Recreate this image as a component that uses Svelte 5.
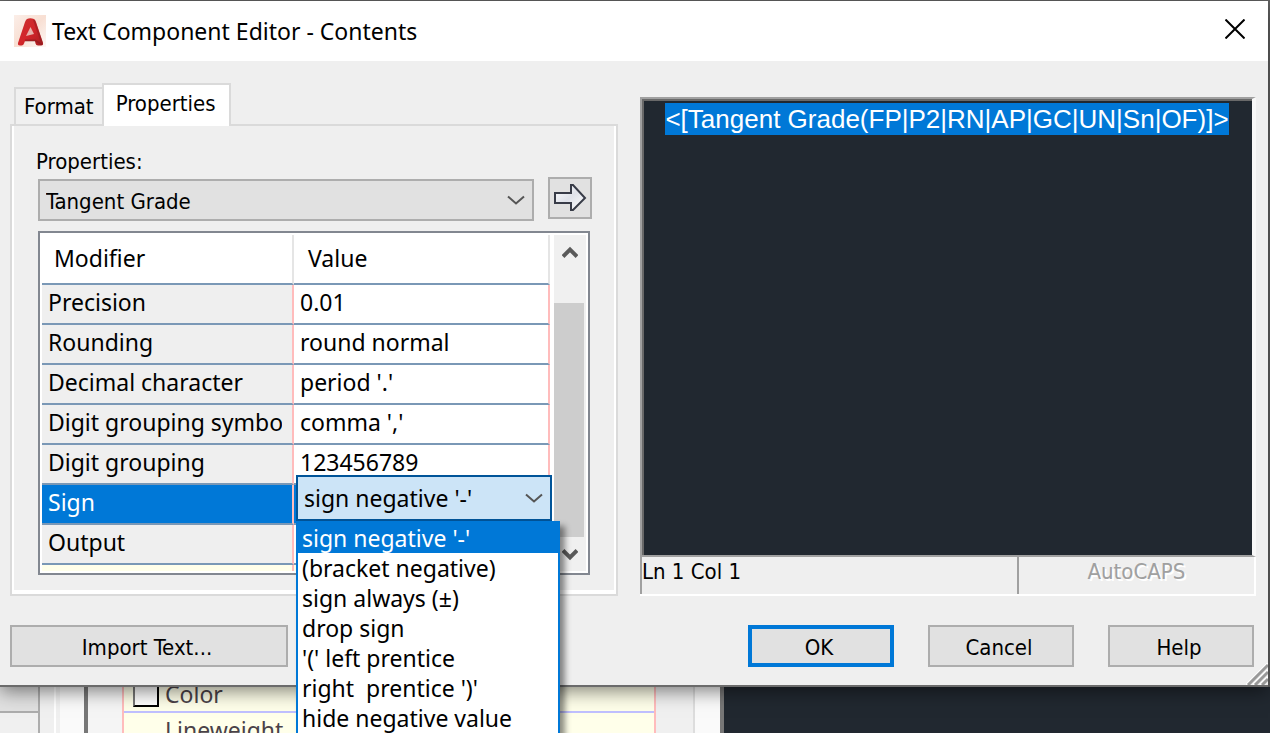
<script lang="ts">
    const modifiers = [
        { name: "Precision", value: "0.01" },
        { name: "Rounding", value: "round normal" },
        { name: "Decimal character", value: "period '.'" },
        { name: "Digit grouping symbol", value: "comma ','" },
        { name: "Digit grouping", value: "123456789" },
        { name: "Sign", value: "sign negative '-'" },
        { name: "Output", value: "" },
    ];
    const signs = [
        "sign negative '-'",
        "(bracket negative)",
        "sign always (±)",
        "drop sign",
        "'(' left prentice",
        "right  prentice ')'",
        "hide negative value",
    ];

    let sign = $state(signs[0]);
    let tab = $state("Properties");
    let open = $state(true);

    const pick = (value: string) => {
        sign = value;
        open = false;
    }
</script>

{#snippet chevron()}
    <svg class="chevron" width="18" height="12" viewBox="0 0 18 12" aria-hidden="true">
        <path d="M1 2.5 9 9.5 17 2.5" fill="none" stroke="#555" stroke-width="2" />
    </svg>
{/snippet}

<div class="screen">
    <section class="dialog" role="dialog" aria-label="Text Component Editor - Contents">
        <header>
            <svg class="logo" width="32" height="32" viewBox="0 0 32 32" aria-hidden="true">
                <defs>
                    <linearGradient id="paper" x2="1" y2="1">
                        <stop offset="0" stop-color="#fbeee8" />
                        <stop offset=".5" stop-color="#f8dfd3" />
                        <stop offset="1" stop-color="#fdf8f5" />
                    </linearGradient>
                    <linearGradient id="red" x2="1" y2="1">
                        <stop offset="0" stop-color="#c9302f" />
                        <stop offset=".5" stop-color="#d3262a" />
                        <stop offset="1" stop-color="#a81c20" />
                    </linearGradient>
                </defs>
                <rect width="32" height="32" fill="url(#paper)" />
                <path d="M13 4q3-1.500 7 0 1 .5 2 3l7 21q.5 2.500-2 2.500h-3q-2 0-2.500-2L21 26H11l-1 2.500q-.5 2-2.500 2H6q-2.500 0-2-2.500l7-21q1-2.500 2-3z" fill="url(#red)" />
                <path d="M16.500 12 20 19l-8 2z" fill="#e6b3ab" />
                <path d="M11 25.500h10l7 4" fill="none" stroke="#7f1a1d" stroke-width="2" opacity=".5" />
                <path d="M20 5l8 23" stroke="#8e1d20" stroke-width="2" opacity=".5" />
            </svg>
            <h1>Text Component Editor - Contents</h1>
            <button class="close" aria-label="Close">
                <svg width="20" height="20" viewBox="0 0 20 20">
                    <path d="M.5.5l19 19M19.5.5l-19 19" stroke="#000" stroke-width="2" />
                </svg>
            </button>
        </header>

        <div class="body">
            <div class="left">
                <div class="tabs" role="tablist">
                    {#each ["Format", "Properties"] as name}
                        <button role="tab" class:active={tab == name} aria-selected={tab == name} on:click={() => tab = name}>{name}</button>
                    {/each}
                </div>
                <div class="panel">
                    <label for="property">Properties:</label>
                    <div class="picker">
                        <div class="combo">
                            <select id="property"><option>Tangent Grade</option></select>
                            {@render chevron()}
                        </div>
                        <button class="insert" aria-label="Insert property">
                            <svg width="34" height="30" viewBox="0 0 34 30">
                                <defs>
                                    <linearGradient id="arrow" x2="1" y2="1">
                                        <stop offset="0" stop-color="#fff" />
                                        <stop offset=".5" stop-color="#dfe2ea" />
                                        <stop offset="1" stop-color="#fff" />
                                    </linearGradient>
                                </defs>
                                <path d="M2 10h16V2h2l12 13-12 12h-2v-7H2z" fill="url(#arrow)" stroke="#383c48" stroke-width="2" />
                            </svg>
                        </button>
                    </div>

                    <div class="list">
                        <table>
                            <thead>
                                <tr><th>Modifier</th><th>Value</th></tr>
                            </thead>
                            <tbody>
                                {#each modifiers as row}
                                    <tr class:selected={row.name == "Sign"}>
                                        <td><div class="clip">{row.name}</div></td>
                                        <td>
                                            {#if row.name == "Sign"}
                                                <div class="editor">
                                                    <div class="combo hot">
                                                        <select aria-label="Sign" bind:value={sign}>
                                                            {#each signs as s}<option>{s}</option>{/each}
                                                        </select>
                                                        {@render chevron()}
                                                    </div>
                                                    {#if open}
                                                        <div class="options" role="listbox">
                                                            {#each signs as s}
                                                                <button role="option" aria-selected={s == sign} class:current={s == sign} on:click={() => pick(s)}>{s}</button>
                                                            {/each}
                                                        </div>
                                                    {/if}
                                                </div>
                                            {:else}
                                                {row.value}
                                            {/if}
                                        </td>
                                    </tr>
                                {/each}
                                <tr class="blank"><td></td><td></td></tr>
                            </tbody>
                        </table>
                        <div class="scrollbar">
                            <svg width="16" height="14" viewBox="0 0 16 14" aria-hidden="true">
                                <path d="M1 10.5 8 3.5 15 10.5" fill="none" stroke="#5a5a5a" stroke-width="4" />
                            </svg>
                            <div class="thumb"></div>
                            <svg width="16" height="14" viewBox="0 0 16 14" aria-hidden="true">
                                <path d="M1 3.5 8 10.5 15 3.5" fill="none" stroke="#5a5a5a" stroke-width="4" />
                            </svg>
                        </div>
                    </div>
                </div>
            </div>

            <div class="right">
                <div class="preview" contenteditable="true" role="textbox" aria-label="Contents" tabindex="0" spellcheck="false"><span>&lt;[Tangent Grade(FP|P2|RN|AP|GC|UN|Sn|OF)]&gt;</span></div>
                <div class="status">
                    <div>Ln 1 Col 1</div>
                    <div class="caps">AutoCAPS</div>
                </div>
            </div>
        </div>

        <footer>
            <button class="import">Import Text...</button>
            <button class="ok">OK</button>
            <button>Cancel</button>
            <button>Help</button>
        </footer>
        <svg class="grip" width="22" height="22" viewBox="0 0 22 22" aria-hidden="true">
            <path d="M0 22 22 0M7 22 22 7M14 22l8-8" stroke="#fff" stroke-width="2" />
            <path d="M2 22 22 2M9 22 22 9M16 22l6-6" stroke="#999" stroke-width="3" />
        </svg>
    </section>

    <!-- window behind the dialog -->
    <div class="behind">
        <div class="edge"></div>
        <div class="gutter"></div>
        <div class="grid">
            <label class="line"><input type="checkbox" />Color</label>
            <div class="line">Lineweight</div>
        </div>
        <div class="rail"></div>
        <div class="canvas"></div>
    </div>
</div>

<style>
    :global(body) {
        background: #212830;
    }

    .screen {
        --ui: "DejaVu Sans Condensed", "Noto Sans", sans-serif;
        --grid: "Noto Sans", "Open Sans", sans-serif;
        box-sizing: border-box;
        display: flex;
        flex-direction: column;
        height: 100vh;
        padding-top: 1px;
        overflow: hidden;
        background: #666;
        font-family: var(--ui);
        font-size: 22px;
        color: #000;
    }

    .screen * {
        box-sizing: border-box;
    }

    button,
    select {
        font: inherit;
        color: inherit;
    }

    button {
        padding: 0;
        border: 2px solid #adadad;
        background: #e1e1e1;
    }

    .dialog {
        position: relative;
        z-index: 1;
        margin-right: 2px;
        background: #efefef;
        border-bottom: 2px solid #6b6b6b;
        box-shadow: 0 4px 18px rgba(0, 0, 0, .5);
    }

    header {
        display: flex;
        align-items: center;
        height: 60px;
        padding: 0 23px 0 14px;
        background: #fff;
    }

    h1 {
        flex: 1;
        margin: 0 0 0 6px;
        font-family: var(--grid);
        font-size: 23px;
        font-weight: normal;
    }

    .close {
        display: flex;
        padding-bottom: 4px;
        border: none;
        background: none;
    }

    .body {
        display: flex;
        gap: 22px;
        padding: 22px 12px 0 10px;
    }

    .left {
        display: flex;
        flex-direction: column;
        flex: 608 1 0;
        min-width: 0;
    }

    .tabs {
        position: relative;
        display: flex;
        align-items: flex-end;
        padding-left: 4px;
        margin-bottom: -2px;
    }

    .tabs button {
        height: 39px;
        padding: 0 8px;
        background: #f0f0f0;
        border-color: #dadada;
        border-right: none;
    }

    .tabs button.active {
        height: 43px;
        padding: 0 13px 4px 12px;
        background: #fff;
        border: 2px solid #dadada;
        border-bottom: none;
    }

    .panel {
        flex: 1;
        padding: 20px 26px 19px 24px;
        border: 2px solid #dadada;
        box-shadow: inset 2px 0 #fff, inset -2px -4px #fff;
    }

    .panel label {
        display: block;
        line-height: 32px;
    }

    .picker {
        display: flex;
        align-items: flex-start;
        gap: 14px;
        margin: -1px -2px 10px 2px;
    }

    .combo {
        position: relative;
        display: flex;
        align-items: center;
        flex: 1;
        margin-top: 2px;
    }

    .combo select {
        appearance: none;
        width: 100%;
        height: 42px;
        padding: 2px 30px 0 6px;
        border: 2px solid #adadad;
        border-radius: 0;
        background: #e1e1e1;
    }

    .chevron {
        position: absolute;
        right: 9px;
        pointer-events: none;
    }

    .insert {
        display: flex;
        align-items: center;
        justify-content: center;
        width: 44px;
        height: 42px;
    }

    .list {
        display: flex;
        margin-left: 2px;
        padding: 2px;
        border: 2px solid #828790;
        background: #fff;
        font-family: var(--grid);
        font-size: 23px;
    }

    table {
        flex: 1;
        table-layout: fixed;
        border-collapse: separate;
        border-spacing: 0;
        width: 100%;
    }

    th {
        height: 50px;
        padding: 0 12px 2px;
        border-right: 2px solid #e5e5e5;
        border-bottom: 2px solid #7a98b6;
        font-weight: normal;
        line-height: 32px;
        text-align: left;
    }

    th:first-child {
        width: 252px;
    }

    th + th {
        padding-left: 14px;
    }

    td {
        height: 40px;
        padding: 0 10px 4px 6px;
        border-right: 2px solid #ffbcbc;
        border-bottom: 2px solid #7a98b6;
        background: #efefef;
        line-height: 32px;
    }

    td + td {
        background: #fff;
    }

    .clip {
        overflow: hidden;
        white-space: nowrap;
    }

    .selected td {
        background: #0078d7;
        color: #fff;
    }

    .blank td {
        height: 6px;
        padding: 0;
        border-bottom: none;
        background: #ffffea;
    }

    .editor {
        position: absolute;
        width: 256px;
        margin: -27px 0 0 -4px;
        color: #000;
    }

    .hot {
        margin: 0;
    }

    .hot select {
        height: 46px;
        padding-top: 0;
        border-color: #005499;
        background: #cce4f7;
    }

    .options {
        position: absolute;
        top: 100%;
        left: 0;
        display: flex;
        flex-direction: column;
        width: 264px;
        border: 2px solid #0078d7;
        background: #fff;
        box-shadow: 5px 5px 6px rgba(0, 0, 0, .45);
    }

    .options button {
        height: 30px;
        padding: 0 4px;
        border: none;
        background: none;
        line-height: 30px;
        text-align: left;
        white-space: pre;
    }

    .options .current {
        background: #0078d7;
        color: #fff;
    }

    .scrollbar {
        display: flex;
        flex-direction: column;
        align-items: center;
        width: 32px;
        margin-left: 4px;
        padding: 11px 0 10px;
        background: #f0f0f0;
    }

    .thumb {
        flex: 1;
        align-self: stretch;
        margin: 43px 2px 10px 0;
        background: #cdcdcd;
    }

    .right {
        display: flex;
        flex-direction: column;
        flex: 616 1 0;
        min-width: 0;
        margin-top: 14px;
    }

    .preview {
        flex: 1;
        padding: 4px 0 0;
        border: 2px solid #a0a0a0;
        border-right: 4px solid #f8f8f8;
        box-shadow: inset 2px 2px #696969;
        background: #212830;
        color: #fff;
        font-family: "Liberation Sans", Arial, sans-serif;
        font-size: 26px;
        line-height: 32px;
        text-align: center;
    }

    .preview span {
        display: inline-block;
        background: #0078d7;
    }

    .status {
        display: flex;
        height: 39px;
        line-height: 30px;
        border-bottom: 2px solid #fff;
        border-right: 2px solid #fff;
    }

    .status div {
        flex: 376 1 0;
        border-left: 2px solid #a0a0a0;
    }

    .status .caps {
        flex: 236 1 0;
        text-align: center;
        color: #a0a0a0;
        text-shadow: 2px 2px #fff;
    }

    footer {
        display: flex;
        gap: 34px;
        padding: 29px 14px 18px 10px;
    }

    footer button {
        width: 146px;
        height: 42px;
        padding: 2px 4px 0 0;
    }

    footer .import {
        width: 278px;
        margin-right: auto;
    }

    footer .ok {
        border: 4px solid #0078d7;
    }

    .grip {
        position: absolute;
        right: 0;
        bottom: 0;
    }

    .behind {
        display: flex;
        flex: 1;
        min-height: 0;
        background: #f0f0f0;
        font-family: var(--grid);
        font-size: 23px;
    }

    .edge {
        width: 40px;
        background: linear-gradient(#e1e1e1 24px, #adadad 24px 26px, #f0f0f0 26px);
        border-right: 2px solid #adadad;
    }

    .gutter {
        width: 82px;
        border-left: 14px solid #f0f0f0;
        background: linear-gradient(90deg, #fff 2px, #f0f0f0 2px 6px, #fafafa 6px 30px, #777 30px 34px, #f5f5f5 34px);
    }

    .grid {
        flex: 0 1 534px;
        border-left: 2px solid #ffbcbc;
        border-right: 2px solid #ffbcbc;
        background: #ffffea;
        color: #4a4248;
    }

    .line {
        display: flex;
        align-items: flex-end;
        height: 26px;
        padding-left: 41px;
        border-bottom: 2px solid #c0c0ff;
        line-height: 34px;
    }

    div.line {
        height: 40px;
        line-height: 42px;
    }

    .line input {
        appearance: none;
        flex: none;
        width: 26px;
        height: 26px;
        margin: 0 6px 4px -32px;
        border: 2px solid #000;
        border-left-color: #777;
        background: #fff;
    }

    .rail {
        width: 68px;
        background: linear-gradient(90deg, #f0f0f0 37px, #ddd 37px 39px, #fafafa 39px 64px, #777 64px);
    }

    .canvas {
        flex: 1;
        background: #212830;
    }
</style>
